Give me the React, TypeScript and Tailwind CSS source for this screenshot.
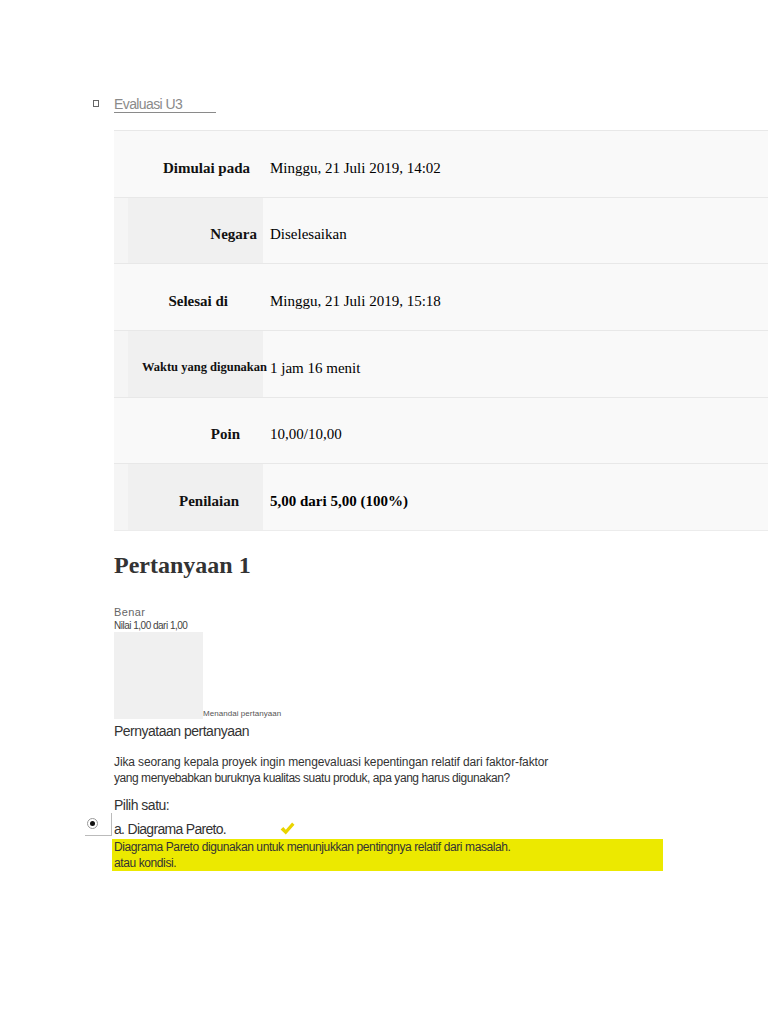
import React from "react";

const rows: { label: string; value: string; gray: boolean; pr: string; small?: boolean; bold?: boolean }[] = [
  { label: "Dimulai pada", value: "Minggu, 21 Juli 2019, 14:02", gray: false, pr: "pr-[13px]" },
  { label: "Negara", value: "Diselesaikan", gray: true, pr: "pr-[6px]" },
  { label: "Selesai di", value: "Minggu, 21 Juli 2019, 15:18", gray: false, pr: "pr-[35px]" },
  { label: "Waktu yang digunakan", value: "1 jam 16 menit", gray: true, pr: "pr-0", small: true },
  { label: "Poin", value: "10,00/10,00", gray: false, pr: "pr-[23px]" },
  { label: "Penilaian", value: "5,00 dari 5,00 (100%)", gray: true, pr: "pr-[24px]", bold: true },
];

export default function App() {
  return (
    <div className="min-h-[1024px] w-[768px] bg-white overflow-hidden" style={{ fontFamily: '"Liberation Sans", Arial, sans-serif' }}>
      <div className="pt-[96px]">
        {/* breadcrumb */}
        <div className="flex items-center h-[17px] pl-[93px]">
          <div className="w-[6px] h-[7px] border border-[#666] mb-[3px]" />
          <div className="ml-[15px] w-[102px] h-[17px] border-b border-[#8a8a8a] text-[14px] leading-[16px] text-[#8a8a8a] tracking-[-0.6px]">
            Evaluasi U3
          </div>
        </div>

        {/* table */}
        <div className="mt-[17px] ml-[114px] w-[654px] border-b border-[#ececec]" style={{ fontFamily: '"Liberation Serif", "Times New Roman", serif' }}>
          {rows.map((r) => (
            <div key={r.label} className="flex h-[66.67px] border-t-[1.5px] border-[#e8e8e8] bg-[#f9f9f9]">
              <div className={`flex w-[149px] shrink-0 ${r.gray ? "bg-[#f0f0f0]" : ""}`}>
                <div className={`w-[14px] shrink-0 ${r.gray ? "bg-[#f5f5f5]" : ""}`} />
                <div className={`flex flex-1 items-center justify-end pt-[8px] ${r.pr}`}>
                  <span className={`font-bold whitespace-nowrap text-[#111] ${r.small ? "text-[12.5px] mr-[-4px]" : "text-[15px]"}`}>{r.label}</span>
                </div>
              </div>
              <div className={`flex items-center pt-[8px] pl-[7px] text-[15px] text-black ${r.bold ? "font-bold" : ""}`}>
                {r.value}
              </div>
            </div>
          ))}
        </div>

        {/* question */}
        <div className="pl-[114px]">
          <h2 className="mt-[20px] text-[24px] leading-[28px] font-bold text-[#333]" style={{ fontFamily: '"Liberation Serif", "Times New Roman", serif' }}>
            Pertanyaan 1
          </h2>
          <div className="mt-[27px] text-[11px] leading-[13px] text-[#666] tracking-[0.4px]">Benar</div>
          <div className="mt-[1px] text-[10px] leading-[12px] text-[#444] tracking-[-0.5px]">Nilai 1,00 dari 1,00</div>
          <div className="flex items-end">
            <div className="w-[89px] h-[87px] bg-[#f0f0f0]" />
            <span className="text-[8px] leading-[10px] text-[#555] tracking-[0.05px]">Menandai pertanyaan</span>
          </div>
          <div className="mt-[4px] text-[14px] leading-[16px] text-[#333] tracking-[-0.5px]">Pernyataan pertanyaan</div>
          <div className="mt-[15px] text-[12px] leading-[16px] text-[#333]">
            <div className="tracking-[-0.12px]">Jika seorang kepala proyek ingin mengevaluasi kepentingan relatif dari faktor-faktor</div>
            <div className="tracking-[-0.45px]">yang menyebabkan buruknya kualitas suatu produk, apa yang harus digunakan?</div>
          </div>
          <div className="mt-[11px] text-[14px] leading-[16px] text-[#333] tracking-[-0.5px]">Pilih satu:</div>
        </div>

        <div className="mt-[0px] flex items-end pl-[85px]">
          <div className="relative w-[27px] h-[23px] border-b border-r border-[#bbb] mb-[1px]">
            <div className="absolute left-[2px] top-[5px] w-[11px] h-[11px] rounded-full border border-[#999] bg-white flex items-center justify-center">
              <div className="w-[5px] h-[5px] rounded-full bg-[#111]" />
            </div>
          </div>
          <div className="ml-[2px] flex items-center text-[14px] leading-[16px] text-[#333] tracking-[-0.7px]">
            <span>a. Diagrama Pareto.</span>
            <svg className="ml-[54px] mt-[-1px]" width="15" height="13" viewBox="0 0 15 13">
              <path d="M0.6 7.4 L3.3 5 L5.8 7.8 L12.1 0.6 L14.5 2.8 L5.8 12.4 Z" fill="#e9d400" />
            </svg>
          </div>
        </div>

        <div className="mt-[2px] ml-[112px] w-[551px] h-[32px] bg-[#ece900] pl-[2px] text-[12px] leading-[16px] text-[#333] tracking-[-0.4px]">
          <div>Diagrama Pareto digunakan untuk menunjukkan pentingnya relatif dari masalah.</div>
          <div>atau kondisi.</div>
        </div>
      </div>
    </div>
  );
}
